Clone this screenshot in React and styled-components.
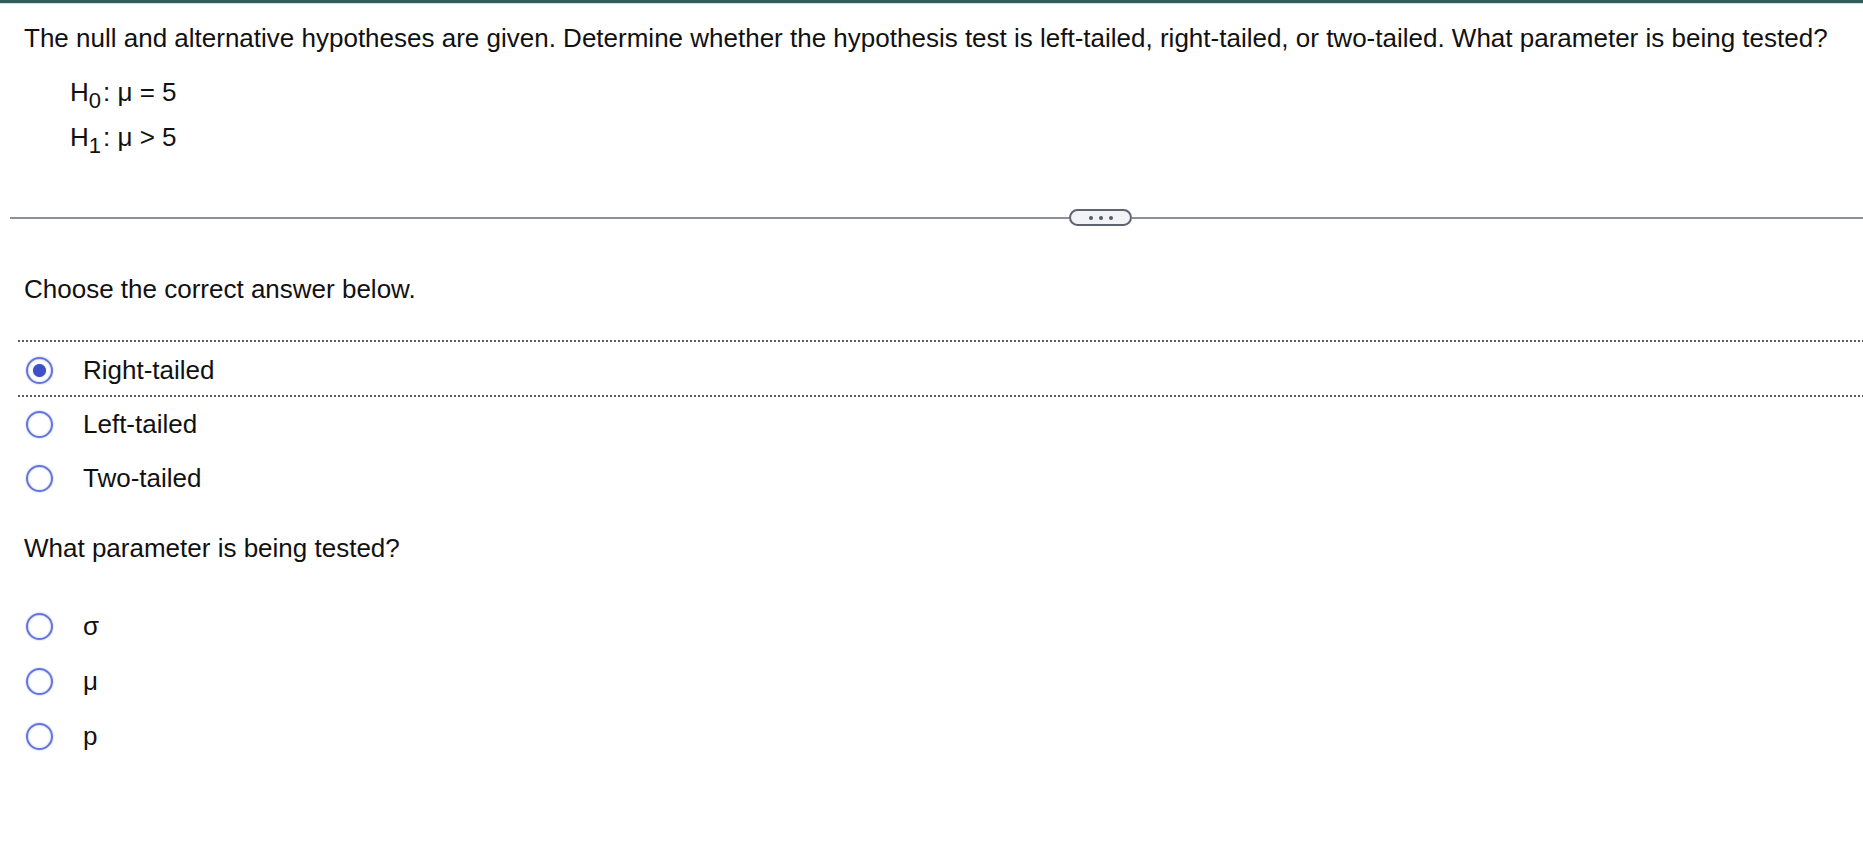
import React from 'react';
import styled, { createGlobalStyle } from 'styled-components';

const GlobalStyle = createGlobalStyle`
    html, body {
        margin: 0;
        padding: 0;
        background: #ffffff;
    }
    body {
        font-family: "Liberation Sans", Arial, sans-serif;
        color: #111111;
    }
`;

const Page = styled.div`
    width: 1863px;
    min-height: 855px;
    display: flex;
    flex-direction: column;
    background: #ffffff;
`;

const TopBar = styled.div`
    height: 3px;
    background: #2d5e5b;
    border-bottom: 1px solid #d6dedd;
`;

const Prompt = styled.div`
    margin: 19px 0 0 24px;
    font-size: 26px;
    line-height: 30px;
    white-space: nowrap;
`;

const Hypotheses = styled.div`
    margin: 17px 0 0 70px;
    display: flex;
    flex-direction: column;
`;

const HypLine = styled.div`
    height: 45px;
    line-height: 45px;
    font-size: 26px;
`;

const Sub = styled.span`
    font-size: 22px;
    vertical-align: -7px;
    line-height: 0;
    margin-right: 2px;
`;

const Divider = styled.div`
    margin: 49px 0 0 10px;
    height: 17px;
    display: flex;
    align-items: center;
`;

const Rule = styled.div`
    flex: ${props => (props.$width ? 'none' : '1')};
    width: ${props => (props.$width ? `${props.$width}px` : 'auto')};
    height: 2px;
    background: #8b909b;
`;

const MorePill = styled.div`
    width: 59px;
    height: 13px;
    border: 2px solid #5d6470;
    border-radius: 9px;
    background: #f1f3f6;
    display: flex;
    align-items: center;
    justify-content: center;
    gap: 6px;
`;

const Dot = styled.span`
    width: 4px;
    height: 4px;
    border-radius: 50%;
    background: #555c68;
`;

const Heading = styled.div`
    margin: ${props => props.$top}px 0 0 24px;
    font-size: 26px;
    line-height: 30px;
`;

const OptionList = styled.div`
    margin: ${props => props.$top}px 0 0 18px;
    display: flex;
    flex-direction: column;
`;

const dotted = `repeating-linear-gradient(to right, #5c5c5c 0 2px, transparent 2px 4px)`;

const Option = styled.div`
    box-sizing: border-box;
    height: ${props => (props.$focused ? 57 : props.$height)}px;
    display: flex;
    align-items: center;
    padding: ${props => (props.$focused ? '4px' : '0')} 0 0 8px;
    background-image: ${props => (props.$focused ? `${dotted}, ${dotted}` : 'none')};
    background-size: 100% 2px, 100% 2px;
    background-position: top left, bottom left;
    background-repeat: no-repeat;
    font-size: 26px;
`;

const Radio = styled.span`
    box-sizing: border-box;
    width: 27px;
    height: 27px;
    border-radius: 50%;
    border: 2.5px solid #6476d8;
    box-shadow: 0 0 2px rgba(100, 118, 216, 0.55), inset 0 0 2px rgba(100, 118, 216, 0.55);
    display: flex;
    align-items: center;
    justify-content: center;
    flex-shrink: 0;
`;

const RadioDot = styled.span`
    width: 13px;
    height: 13px;
    border-radius: 50%;
    background: #3d50c6;
    box-shadow: 0 0 1px rgba(61, 80, 198, 0.8);
`;

const OptionLabel = styled.span`
    margin-left: 30px;
`;

function RadioOption({ label, checked, focused, height = 54 }) {
    return (
        <Option $focused={focused} $height={height}>
            <Radio>{checked && <RadioDot />}</Radio>
            <OptionLabel>{label}</OptionLabel>
        </Option>
    );
}

export default function App() {
    return (
        <Page>
            <GlobalStyle />
            <TopBar />
            <Prompt>
                The null and alternative hypotheses are given. Determine whether the hypothesis test is
                left-tailed, right-tailed, or two-tailed. What parameter is being tested?
            </Prompt>
            <Hypotheses>
                <HypLine>H<Sub>0</Sub>: μ = 5</HypLine>
                <HypLine>H<Sub>1</Sub>: μ &gt; 5</HypLine>
            </Hypotheses>
            <Divider>
                <Rule />
                <MorePill>
                    <Dot />
                    <Dot />
                    <Dot />
                </MorePill>
                <Rule $width={731} />
            </Divider>
            <Heading $top={48}>Choose the correct answer below.</Heading>
            <OptionList $top={36}>
                <RadioOption label="Right-tailed" checked focused />
                <RadioOption label="Left-tailed" />
                <RadioOption label="Two-tailed" />
            </OptionList>
            <Heading $top={28}>What parameter is being tested?</Heading>
            <OptionList $top={36}>
                <RadioOption label="σ" height={55} />
                <RadioOption label="μ" height={55} />
                <RadioOption label="p" height={55} />
            </OptionList>
        </Page>
    );
}
